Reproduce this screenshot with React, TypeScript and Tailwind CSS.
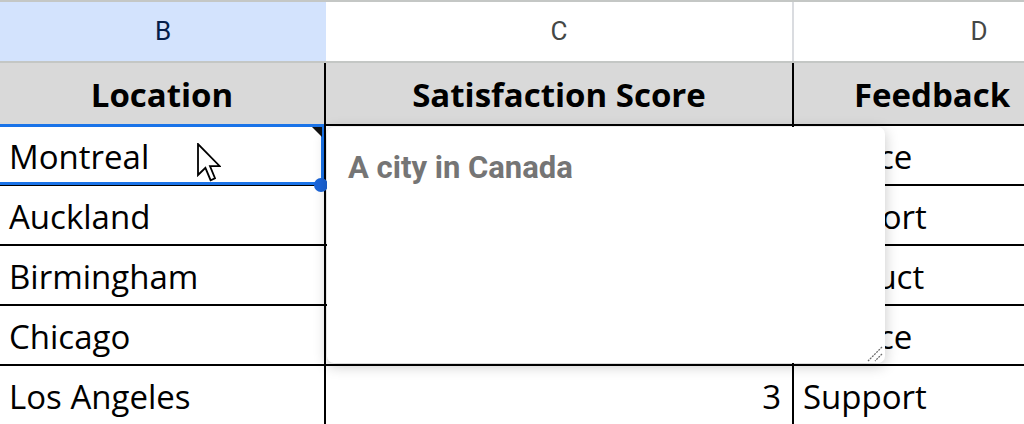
import React from "react";

type Row = { loc: string; score: string; fb: string };

const rows: Row[] = [
  { loc: "Montreal", score: "4", fb: "Service" },
  { loc: "Auckland", score: "5", fb: "Support" },
  { loc: "Birmingham", score: "2", fb: "Product" },
  { loc: "Chicago", score: "4", fb: "Service" },
  { loc: "Los Angeles", score: "3", fb: "Support" },
];

function Cursor() {
  return (
    <svg width="24" height="40" viewBox="0 0 12 20" className="absolute left-[197px] top-[143px]">
      <path
        d="M0.5 0.5 L0.5 16 L4.2 12.4 L6.8 18.6 L9 17.6 L6.5 11.6 L11.4 11.6 Z"
        fill="white"
        stroke="black"
        strokeWidth="0.9"
        strokeLinejoin="miter"
      />
    </svg>
  );
}

function ResizeGrip() {
  return (
    <svg width="18" height="18" viewBox="0 0 18 18" className="absolute right-[1px] bottom-[0px]">
      <line x1="16" y1="2" x2="2" y2="16" stroke="#6b6b6b" strokeWidth="1.3" strokeDasharray="2 1" />
      <line x1="16" y1="9" x2="9" y2="16" stroke="#6b6b6b" strokeWidth="1.3" strokeDasharray="2 1" />
    </svg>
  );
}

export default function App() {
  return (
    <div className="relative w-[1024px] h-[424px] overflow-hidden bg-white font-['Open_Sans',sans-serif] text-black">
      {/* column letters */}
      <div className="flex h-[63px] border-t-2 border-b-2 border-[#c4c7c5] font-['Roboto',sans-serif] text-[26px]">
        <div className="w-[326px] shrink-0 bg-[#d3e3fd] flex items-center justify-center text-[#041e49]">B</div>
        <div className="w-[468px] shrink-0 border-r-2 border-[#dadce0] flex items-center justify-center text-[#444746]">C</div>
        <div className="w-[370px] shrink-0 flex items-center justify-center text-[#444746]">D</div>
      </div>

      {/* table header */}
      <div className="flex h-[63px] bg-[#d9d9d9] border-b-2 border-black text-[33px] font-bold">
        <div className="w-[326px] shrink-0 border-r-2 border-black flex items-center justify-center pt-[2px]">Location</div>
        <div className="w-[468px] shrink-0 border-r-2 border-black flex items-center justify-center pt-[2px]">Satisfaction Score</div>
        <div className="w-[370px] shrink-0 flex items-center pl-[60px] pt-[2px]">Feedback</div>
      </div>

      {/* data rows */}
      {rows.map((r) => (
        <div key={r.loc} className="flex h-[60px] border-b-2 border-black text-[33px]">
          <div className="w-[326px] shrink-0 border-r-2 border-black flex items-center pl-[9px] pt-[4px]">{r.loc}</div>
          <div className="w-[468px] shrink-0 border-r-2 border-black flex items-center justify-end pr-[11px] pt-[4px]">{r.score}</div>
          <div className="w-[370px] shrink-0 flex items-center pl-[9px] pt-[4px]">{r.fb}</div>
        </div>
      ))}

      {/* active cell selection */}
      <div className="absolute left-[-4px] top-[124px] w-[328px] h-[61px] border-[3px] border-[#1a73e8]" />
      <svg width="10" height="10" viewBox="0 0 10 10" className="absolute left-[312px] top-[127px]">
        <polygon points="0,0 10,0 10,10" fill="#111" />
      </svg>
      <div className="absolute left-[314px] top-[178px] w-[14px] h-[14px] rounded-full bg-[#1a64d8]" />

      <Cursor />

      {/* note popup */}
      <div className="absolute left-[327px] top-[127px] w-[558px] h-[236px] bg-white rounded-[7px] shadow-[0_3px_14px_rgba(0,0,0,0.22)]">
        <div className="pl-[21px] pt-[22px] font-['Roboto',sans-serif] font-bold text-[31px] leading-[38px] text-[#757575]">
          A city in Canada
        </div>
        <ResizeGrip />
      </div>
    </div>
  );
}
